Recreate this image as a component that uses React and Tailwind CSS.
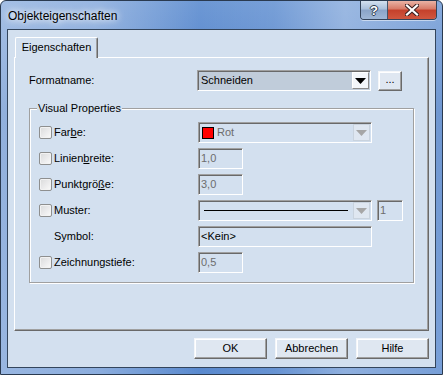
import React from "react";

const sunken =
  "border border-t-[#a0a0a0] border-l-[#a0a0a0] border-r-white border-b-white shadow-[inset_1px_1px_0_#696969]";
const raised =
  "border border-t-[#f4f6f9] border-l-[#f4f6f9] border-r-[#6a6a6a] border-b-[#6a6a6a] shadow-[inset_-1px_-1px_0_#a0a0a0,inset_1px_1px_0_#ffffff]";

function Check() {
  return (
    <div className="w-[13px] h-[13px] shrink-0 border border-[#8e8f8f] rounded-[2px] bg-[linear-gradient(135deg,#d9dadb,#fafafa)] shadow-[inset_0_0_0_1px_#f2f2f2]" />
  );
}

function Arrow({ disabled }) {
  return (
    <div
      className={
        "w-[17px] h-[17px] flex items-center justify-center " +
        (disabled
          ? "bg-[#dfe7f1] border border-[#c9d3de]"
          : "bg-[#f3f6fa] border border-t-white border-l-white border-r-[#8a8a8a] border-b-[#8a8a8a]")
      }
    >
      <svg width="11" height="6" viewBox="0 0 11 6">
        <polygon points="0,0 11,0 5.5,6" fill={disabled ? "#a6a6a6" : "#000"} />
      </svg>
    </div>
  );
}

function Row({ check = true, children, field }) {
  return (
    <div className="flex items-center h-[21px]">
      <div className="w-[159px] flex items-center">
        {check ? <Check /> : <div className="w-[13px]" />}
        <span className="ml-[2px]">{children}</span>
      </div>
      {field}
    </div>
  );
}

function SmallInput({ value }) {
  return (
    <div className={"w-[45px] h-[21px] flex items-center pl-[2px] text-[#6d6d6d] " + sunken}>
      {value}
    </div>
  );
}

export default function App() {
  return (
    <div className="w-[443px] h-[375px] bg-white font-['Liberation_Sans',Arial,sans-serif] text-[11px] text-black leading-none">
      <div className="w-[443px] h-[375px] rounded-t-[6px] border border-[#2a3a50] flex flex-col overflow-hidden bg-[linear-gradient(90deg,rgba(255,255,255,0.38)_0%,rgba(255,255,255,0.3)_22%,rgba(255,255,255,0)_45%,rgba(255,255,255,0.08)_62%,rgba(255,255,255,0.32)_78%,rgba(255,255,255,0.18)_100%),linear-gradient(180deg,#6d98d5_0%,#4f80c7_30%,#5a8acf_100%)]">
        {/* title bar */}
        <div className="h-[28px] flex shrink-0">
          <span className="pl-[7px] pt-[9px] text-[12px] text-black [text-shadow:0_0_6px_#ffffff,0_0_10px_#ffffff]">
            Objekteigenschaften
          </span>
          <div className="ml-auto mr-[5px] flex h-[19px] border border-t-0 border-[#34445a] rounded-b-[4px] overflow-hidden shadow-[0_1px_0_rgba(255,255,255,0.5)]">
            <div className="w-[27px] flex items-center justify-center bg-[linear-gradient(180deg,#d3e0ef_0%,#a9bfdb_45%,#8aa4c8_50%,#9fb7d6_100%)] border-r border-[#44546a]">
              <span className="text-white font-bold text-[13px] [text-shadow:1px_0_0_#2c3a4e,-1px_0_0_#2c3a4e,0_1px_0_#2c3a4e,0_-1px_0_#2c3a4e]">
                ?
              </span>
            </div>
            <div className="w-[48px] flex items-center justify-center bg-[linear-gradient(180deg,#eab3a5_0%,#d77966_45%,#c4402b_50%,#d0573f_100%)]">
              <svg width="14" height="12" viewBox="0 0 14 12">
                <path d="M2 1.5 L12 10.5 M12 1.5 L2 10.5" stroke="#3b2020" strokeWidth="4.2" strokeLinecap="square" />
                <path d="M2 1.5 L12 10.5 M12 1.5 L2 10.5" stroke="#ffffff" strokeWidth="2.2" strokeLinecap="square" />
              </svg>
            </div>
          </div>
        </div>

        {/* client */}
        <div className="mx-[6px] mb-[6px] flex-1 border border-[#33455c] bg-[#d3e0ef] flex flex-col">
          {/* tab strip */}
          <div className="pt-[7px] pl-[7px] flex relative z-10 -mb-px">
            <div className="h-[21px] w-[83px] flex items-center justify-center bg-[#d3e0ef] border border-b-0 border-t-white border-l-white border-r-[#696969] rounded-t-[2px] shadow-[inset_-1px_0_0_#a0a0a0] pb-[1px]">
              Eigenschaften
            </div>
          </div>

          {/* panel */}
          <div className="ml-[6px] w-[415px] h-[274px] border border-t-white border-l-white border-r-[#696969] border-b-[#696969] shadow-[inset_-1px_-1px_0_#a0a0a0] pl-[14px] pt-[12px]">
            {/* formatname */}
            <div className="flex items-center">
              <span className="w-[168px]">Formatname:</span>
              <div className={"w-[174px] h-[21px] flex items-center justify-between pl-[3px] pr-[1px] bg-[#c0ccda] " + sunken}>
                <span>Schneiden</span>
                <Arrow />
              </div>
              <div className={"ml-[7px] w-[24px] h-[20px] flex items-center justify-center bg-[#dfe7f1] pb-[3px] " + raised}>
                ...
              </div>
            </div>

            {/* group */}
            <div className="relative mt-[17px] w-[385px] h-[175px] border border-[#a0a0a0] shadow-[inset_1px_1px_0_#ffffff,1px_1px_0_#ffffff] pl-[9px] pt-[13px] flex flex-col gap-[5px]">
              <span className="absolute left-[7px] -top-[6px] px-[1px] bg-[#d3e0ef]">Visual Properties</span>

              <Row
                field={
                  <div className={"w-[174px] h-[21px] flex items-center justify-between pl-[3px] pr-[1px] " + sunken}>
                    <div className="flex items-center">
                      <div className="w-[12px] h-[12px] bg-[#ff0000] border border-black" />
                      <span className="ml-[3px] text-[#6d6d6d]">Rot</span>
                    </div>
                    <Arrow disabled />
                  </div>
                }
              >
                Far<u>b</u>e:
              </Row>

              <Row field={<SmallInput value="1,0" />}>
                Linien<u>b</u>reite:
              </Row>

              <Row field={<SmallInput value="3,0" />}>
                Punktgrö<u>ß</u>e:
              </Row>

              <Row
                field={
                  <div className="flex items-center">
                    <div className={"w-[174px] h-[21px] flex items-center justify-between pl-[5px] pr-[1px] " + sunken}>
                      <div className="w-[144px] h-px bg-black" />
                      <Arrow disabled />
                    </div>
                    <div className={"ml-[5px] w-[26px] h-[21px] flex items-center pl-[2px] text-[#6d6d6d] " + sunken}>
                      1
                    </div>
                  </div>
                }
              >
                Muster:
              </Row>

              <Row
                check={false}
                field={
                  <div className={"w-[174px] h-[21px] flex items-center pl-[2px] " + sunken}>
                    &lt;Kein&gt;
                  </div>
                }
              >
                Symbol:
              </Row>

              <Row field={<SmallInput value="0,5" />}>Zeichnungstiefe:</Row>
            </div>
          </div>

          {/* buttons */}
          <div className="mt-[7px] pr-[6px] flex justify-end gap-[8px]">
            {["OK", "Abbrechen", "Hilfe"].map((t) => (
              <div
                key={t}
                className={"w-[73px] h-[21px] flex items-center justify-center bg-[#dfe7f1] text-[11px] " + raised}
              >
                {t}
              </div>
            ))}
          </div>
        </div>
      </div>
    </div>
  );
}
